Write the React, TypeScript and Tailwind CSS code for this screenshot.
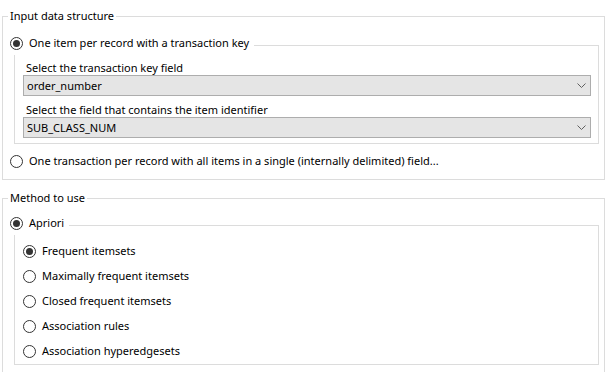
import React from 'react'

function Radio({ checked }: { checked?: boolean }) {
  return (
    <span className="flex h-[13px] w-[13px] shrink-0 items-center justify-center rounded-full border border-[#333333] bg-white">
      {checked && <span className="h-[7px] w-[7px] rounded-full bg-[#333333]" />}
    </span>
  )
}

function Chevron() {
  return (
    <svg width="9" height="5" viewBox="0 0 9 5" className="shrink-0">
      <path d="M0.5 0.5 L4.5 4.5 L8.5 0.5" fill="none" stroke="#606060" strokeWidth="1" />
    </svg>
  )
}

function Select({ value }: { value: string }) {
  return (
    <div className="flex h-[21px] items-center justify-between border border-[#adadad] bg-[#e5e5e5] pl-[3px] pr-[4px]">
      <span className="leading-none">{value}</span>
      <Chevron />
    </div>
  )
}

function RadioRow({ label, checked }: { label: string; checked?: boolean }) {
  return (
    <div className="flex h-[16px] items-center gap-[6px]">
      <Radio checked={checked} />
      <span className="whitespace-nowrap">{label}</span>
    </div>
  )
}

export default function App() {
  return (
    <div
      className="h-[372px] w-[606px] overflow-hidden bg-white pt-[8px] text-[11px] text-black"
      style={{ fontFamily: '"Noto Sans", "Liberation Sans", sans-serif' }}
    >
      {/* Input data structure */}
      <fieldset className="ml-[2px] mr-[1px] border border-[#dcdcdc] pb-[10px] pl-[5px] pr-[5px]">
        <legend className="h-[16px] px-[2px] leading-[16px]">Input data structure</legend>

        <fieldset className="ml-[6px] mt-[11px] border border-[#dcdcdc] pb-[5px] pl-[8px] pr-[7px]">
          <legend className="-ml-[13px] h-[20px] bg-white pb-[4px] pr-[5px]">
            <RadioRow label="One item per record with a transaction key" checked />
          </legend>
          <div className="pt-[6px]">
            <div className="h-[14px] pl-[3px] leading-[14px]">Select the transaction key field</div>
            <Select value="order_number" />
            <div className="mt-[6px] h-[15px] pl-[3px] leading-[15px]">Select the field that contains the item identifier</div>
            <Select value="SUB_CLASS_NUM" />
          </div>
        </fieldset>

        <div className="ml-[2px] mt-[9px]">
          <RadioRow label="One transaction per record with all items in a single (internally delimited) field..." />
        </div>
      </fieldset>

      {/* Method to use */}
      <fieldset className="ml-[2px] mr-[1px] mt-[10px] h-[200px] border border-[#dcdcdc] pl-[5px] pr-[5px]">
        <legend className="h-[16px] px-[2px] leading-[16px]">Method to use</legend>

        <fieldset className="ml-[6px] mt-[9px] border border-[#dcdcdc] pb-[5px] pl-[8px] pr-[7px]">
          <legend className="-ml-[13px] h-[20px] bg-white pb-[4px] pr-[5px]">
            <RadioRow label="Apriori" checked />
          </legend>
          <div className="flex flex-col gap-[9px] pt-[8px]">
            <RadioRow label="Frequent itemsets" checked />
            <RadioRow label="Maximally frequent itemsets" />
            <RadioRow label="Closed frequent itemsets" />
            <RadioRow label="Association rules" />
            <RadioRow label="Association hyperedgesets" />
          </div>
        </fieldset>
      </fieldset>
    </div>
  )
}
